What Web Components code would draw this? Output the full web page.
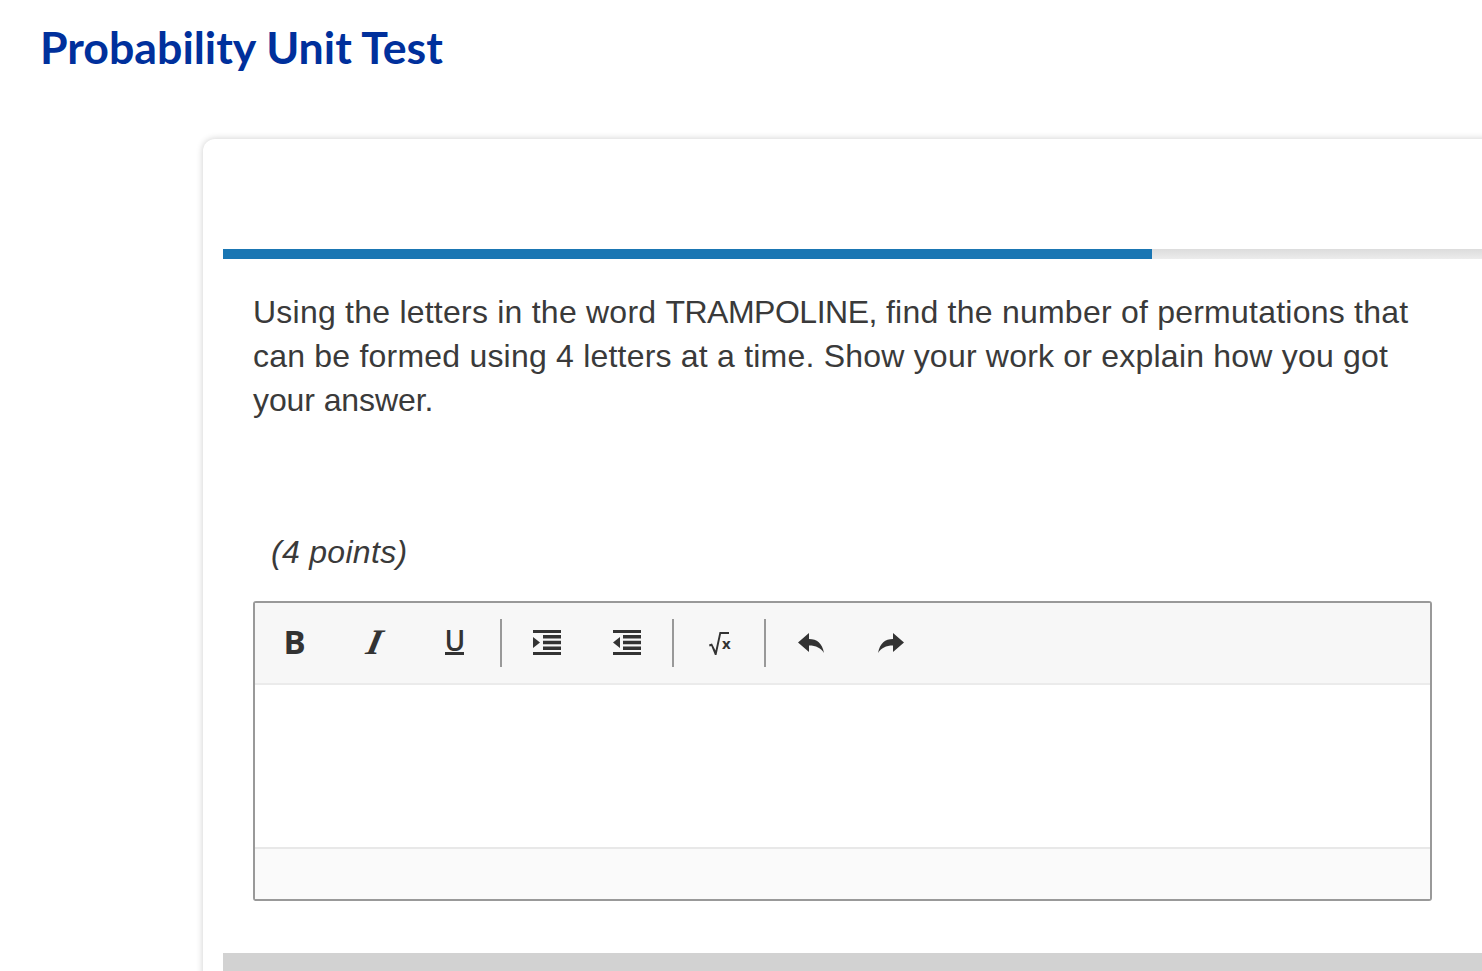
<!DOCTYPE html>
<html><head><meta charset="utf-8"><title>Probability Unit Test</title>
<style>
html,body{margin:0;padding:0;background:#fff;overflow:hidden;height:971px}
</style></head><body>
<test-page>
  <span slot="title">Probability Unit Test</span>
  <test-question points="(4 points)"><div style="letter-spacing:.23px;white-space:nowrap">Using the letters in the word <span style="letter-spacing:-.5px">TRAMPOLINE,</span> find the number of permutations that</div><div style="letter-spacing:.21px;white-space:nowrap">can be formed using 4 letters at a time. Show your work or explain how you got</div><div style="letter-spacing:-.1px;white-space:nowrap">your answer.</div></test-question>
</test-page>
<script>
class TestPage extends HTMLElement{constructor(){super();this.attachShadow({mode:'open'}).innerHTML=`<style>
:host{display:block;height:971px;overflow:hidden}
h1{margin:0;padding:20px 0 0 40px;height:139px;box-sizing:border-box;font:700 44.7px/54px Lato,sans-serif;color:#00309c}
.card{margin-left:203px;width:1400px;height:900px;box-sizing:border-box;background:#fff;border-radius:12px 0 0 0;box-shadow:0 0 7px rgba(0,0,0,.2);padding:110px 0 0 20px}
</style><h1><slot name="title"></slot></h1><div class="card"><slot></slot></div>`}}
class ProgressBar extends HTMLElement{constructor(){super();this.attachShadow({mode:'open'}).innerHTML=`<style>
:host{display:block;height:10px;background:linear-gradient(#dcdcdc,#ececec)}
.fill{height:100%;width:929px;background:#1a76b3}
</style><div class="fill"></div>`}}
class TestQuestion extends HTMLElement{constructor(){super();this.attachShadow({mode:'open'}).innerHTML=`<style>
:host{display:block}
.text{width:1180px;margin:31px 0 0 30px;font:32px/44px "Liberation Sans",Arial,sans-serif;color:#3a3a3a}
.pts{margin:108px 0 0 48px;font:italic 32px/44px "Liberation Sans",Arial,sans-serif;color:#3a3a3a;letter-spacing:.3px}
rich-editor{margin:27px 0 0 30px}
.gray{height:60px;margin-top:52px;background:#d2d2d2}
</style><progress-bar></progress-bar><div class="text"><slot></slot></div><div class="pts"></div><rich-editor></rich-editor><div class="gray"></div>`;
this.shadowRoot.querySelector('.pts').textContent=this.getAttribute('points')}}
class ToolButton extends HTMLElement{constructor(){super();this.attachShadow({mode:'open'}).innerHTML=`<style>
:host{display:flex;width:80px;height:48px;align-items:center;justify-content:center;flex:none;color:#333}
</style><slot></slot>`}}
class RichEditor extends HTMLElement{constructor(){super();this.attachShadow({mode:'open'}).innerHTML=`<style>
:host{display:block;width:1179px;height:300px;box-sizing:border-box;border:2px solid #999;border-radius:3px;background:#fff}
.bar{height:82px;box-sizing:border-box;background:#f7f7f7;border-bottom:2px solid #ebebeb;display:flex;align-items:center}
.body{height:162px}
.foot{height:52px;box-sizing:border-box;background:#fafafa;border-top:2px solid #e8e8e8}
.sep{width:2px;height:48px;background:#999;flex:none}
.b{font:700 33px/1 "Open Sans",sans-serif;color:#333;margin:-4px 1px 0 0}
.i{font:700 36px/1 "Liberation Serif",serif;color:#333;display:block;transform:skewX(-22deg);margin-top:-2px}
.u{color:#333;display:flex;flex-direction:column;align-items:center;margin-top:-2px}
.u b{font:600 28px/21px "Open Sans",sans-serif}
.u i{display:block;width:19px;height:3px;background:#333;margin-top:1px}
svg{display:block;fill:#333}
</style>
<div class="bar">
<tool-button><span class="b">B</span></tool-button>
<tool-button><span class="i">I</span></tool-button>
<tool-button><span class="u"><b>U</b><i></i></span></tool-button>
<div class="sep" style="margin-left:5px"></div>
<tool-button style="margin-left:5px"><svg style="margin-top:-2px" width="28" height="25" viewBox="0 0 28 25"><path d="M0 0h28v3H0zM0 22h28v3H0zM10 5h18v3.600H10zM10 10.700h18v3.600H10zM10 16.400h18v3.600H10zM0 7l7 5.500L0 18z"/></svg></tool-button>
<tool-button><svg style="margin-top:-2px" width="28" height="25" viewBox="0 0 28 25"><path d="M0 0h28v3H0zM0 22h28v3H0zM10 5h18v3.600H10zM10 10.700h18v3.600H10zM10 16.400h18v3.600H10zM7 7L0 12.500 7 18z"/></svg></tool-button>
<div class="sep" style="margin-left:5px"></div>
<tool-button style="width:90px"><svg style="margin-left:4px" width="24" height="24" viewBox="0 0 24 24"><path d="M0 13.500l3-1 3.500 7L10.500 1H20v2h-8L7.500 24h-1.600L2.300 15 .6 15.500z"/><text x="13" y="18" font-family="Open Sans" font-weight="700" font-size="15">x</text></svg></tool-button>
<div class="sep"></div>
<tool-button style="width:90px"><svg style="margin-top:-1px" width="26" height="20" viewBox="0 0 26 20"><path d="M11 0v6c8 0 13 4 15 14-3-5-8-7.500-15-7.500V19L0 9.500z"/></svg></tool-button>
<tool-button style="width:70px"><svg style="margin-top:-1px" width="26" height="20" viewBox="0 0 26 20"><path d="M15 0v6C7 6 2 10 0 20c3-5 8-7.500 15-7.500V19L26 9.500z"/></svg></tool-button>
</div><div class="body"></div><div class="foot"></div>`}}
customElements.define('test-page',TestPage);
customElements.define('progress-bar',ProgressBar);
customElements.define('tool-button',ToolButton);
customElements.define('rich-editor',RichEditor);
customElements.define('test-question',TestQuestion);
</script>
</body></html>
